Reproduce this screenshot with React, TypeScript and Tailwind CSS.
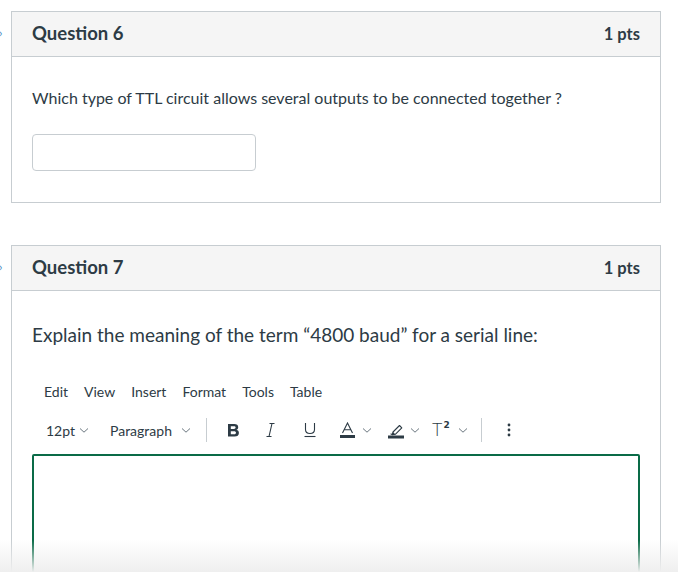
import React from "react";

const Chevron = ({ ml }: { ml: string }) => (
  <svg width="10" height="10" viewBox="0 0 10 10" className={ml}>
    <path d="M1 3.5 L5 7.2 L9 3.5" fill="none" stroke="#6b7780" strokeWidth="1" />
  </svg>
);

function QuestionHeader({ title }: { title: string }) {
  return (
    <div className="flex items-center justify-between h-[45px] px-[20px] bg-[#f5f5f5] border-b border-[#c7cdd1]">
      <span className="text-[18.5px] font-bold text-[#2d3b45]">{title}</span>
      <span className="text-[16.5px] font-bold text-[#2d3b45]">1 pts</span>
    </div>
  );
}

function Toolbar() {
  return (
    <div className="flex items-center h-[28px] pl-[14px] text-[#2d3b45]">
      <span className="text-[14px] w-[25px] whitespace-nowrap">12pt</span>
      <Chevron ml="ml-[8px]" />
      <span className="text-[14px] ml-[21px] w-[62px] whitespace-nowrap">Paragraph</span>
      <Chevron ml="ml-[9px]" />
      <div className="w-px h-[24px] bg-[#c7cdd1] ml-[15px]" />
      {/* bold */}
      <svg width="14" height="16" viewBox="0 0 14 16" className="ml-[20px]">
        <path d="M1 0.5h6.2c2.6 0 4 1.2 4 3.2 0 1.3-.7 2.2-1.8 2.6 1.6.4 2.5 1.5 2.5 3.1 0 2.2-1.6 3.6-4.3 3.6H1V0.5zm2.8 5h3.1c1.1 0 1.7-.5 1.7-1.4s-.6-1.3-1.7-1.3H3.8v2.7zm0 5.2h3.3c1.3 0 1.9-.6 1.9-1.5s-.7-1.5-2-1.5H3.8v3z" fill="#2d3b45" transform="translate(0 1.5)" />
      </svg>
      {/* italic */}
      <svg width="9" height="16" viewBox="0 0 9 16" className="ml-[25px]">
        <path d="M3.5 1.5h5 M0.5 14.5h5 M6 1.5 L3 14.5" fill="none" stroke="#2d3b45" strokeWidth="1.1" />
      </svg>
      {/* underline */}
      <svg width="14" height="16" viewBox="0 0 14 16" className="ml-[28px]">
        <path d="M2.5 1v6.5c0 2.4 2 4 4.5 4s4.5-1.6 4.5-4V1" fill="none" stroke="#2d3b45" strokeWidth="1.1" />
        <path d="M1.5 14.5h11" stroke="#2d3b45" strokeWidth="1.1" />
      </svg>
      {/* text colour */}
      <svg width="15" height="17" viewBox="0 0 15 17" className="ml-[23px]">
        <path d="M2.5 11 L7.5 1 L12.5 11 M4.2 7.8h6.6" fill="none" stroke="#2d3b45" strokeWidth="1.1" />
        <rect x="0" y="13" width="15" height="3" fill="#2d3b45" />
      </svg>
      <Chevron ml="ml-[7px]" />
      {/* highlight */}
      <svg width="16" height="17" viewBox="0 0 16 17" className="ml-[16px]">
        <path d="M5 10 L11.5 3.5 L13.8 5.8 L7.3 12.3 L4.3 12.8 Z M4 12.5 L2.6 11.8" fill="none" stroke="#2d3b45" strokeWidth="1.1" strokeLinejoin="round" />
        <path d="M5 10 L7.3 12.3 L4.3 12.8 Z" fill="#2d3b45" />
        <rect x="0" y="13.5" width="16" height="3" fill="#2d3b45" />
      </svg>
      <Chevron ml="ml-[6px]" />
      {/* superscript */}
      <span className="ml-[12px] w-[21px] flex items-start text-[#2d3b45]">
        <span className="text-[17px] font-extralight leading-none" style={{ fontFamily: "'DejaVu Sans', sans-serif" }}>T</span>
        <span className="text-[9px] font-bold leading-none ml-[1px] -mt-[1px]" style={{ fontFamily: "'DejaVu Sans', sans-serif" }}>2</span>
      </span>
      <Chevron ml="ml-[5px]" />
      <div className="w-px h-[24px] bg-[#c7cdd1] ml-[13px]" />
      <svg width="4" height="16" viewBox="0 0 4 16" className="ml-[25px]">
        <circle cx="2" cy="3" r="1.4" fill="#2d3b45" />
        <circle cx="2" cy="8" r="1.4" fill="#2d3b45" />
        <circle cx="2" cy="13" r="1.4" fill="#2d3b45" />
      </svg>
    </div>
  );
}

export default function App() {
  return (
    <div
      className="relative w-[678px] h-[572px] overflow-hidden bg-white text-[#2d3b45]"
      style={{ fontFamily: "Lato, 'Noto Sans', sans-serif" }}
    >
      <div className="pt-[11px] pl-[11px] flex flex-col gap-[42px]">
        {/* Question 6 */}
        <div className="relative w-[650px] border border-[#c7cdd1]">
          <span className="absolute -left-[13px] top-[15px] text-[#3a8bc5] text-[12px] leading-none">›</span>
          <QuestionHeader title="Question 6" />
          <div className="px-[20px] pt-[30px] pb-[31px]">
            <p className="text-[16px] leading-[22px]">
              Which type of TTL circuit allows several outputs to be connected together ?
            </p>
            <div className="mt-[25px] w-[224px] h-[37px] rounded-[4px] border border-[#c7cdd1] bg-white" />
          </div>
        </div>

        {/* Question 7 */}
        <div className="relative w-[650px] border border-[#c7cdd1] h-[400px]">
          <span className="absolute -left-[13px] top-[15px] text-[#3a8bc5] text-[12px] leading-none">›</span>
          <QuestionHeader title="Question 7" />
          <div className="px-[20px] pt-[30px]">
            <p className="text-[19px] leading-[27px]">
              Explain the meaning of the term “4800 baud” for a serial line:
            </p>
            <div className="mt-[35px] flex gap-[16px] pl-[12px] text-[14px] leading-[18px]">
              <span>Edit</span>
              <span>View</span>
              <span>Insert</span>
              <span>Format</span>
              <span>Tools</span>
              <span>Table</span>
            </div>
            <div className="mt-[15px]">
              <Toolbar />
            </div>
            <div className="mt-[10px] w-[608px] h-[200px] border-2 border-[#0a6b47] rounded-[2px] bg-white" />
          </div>
        </div>
      </div>
      <div className="absolute left-0 right-0 bottom-0 h-[32px] bg-gradient-to-b from-transparent to-[#efefef] pointer-events-none" />
    </div>
  );
}
